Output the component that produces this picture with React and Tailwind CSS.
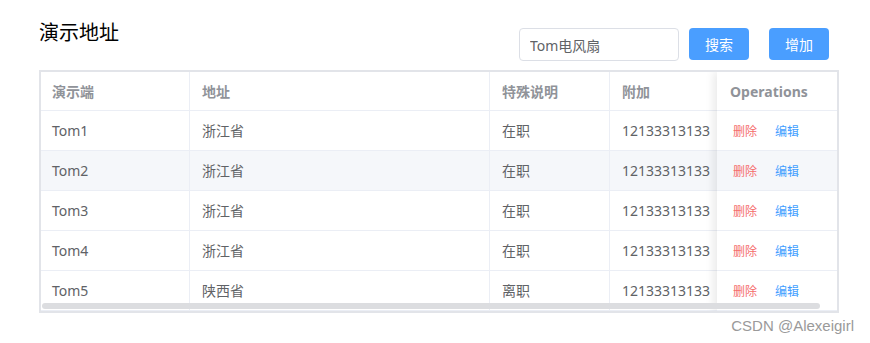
const rows = [
  { name: "Tom1", addr: "浙江省", note: "在职", extra: "12133313133" },
  { name: "Tom2", addr: "浙江省", note: "在职", extra: "12133313133" },
  { name: "Tom3", addr: "浙江省", note: "在职", extra: "12133313133" },
  { name: "Tom4", addr: "浙江省", note: "在职", extra: "12133313133" },
  { name: "Tom5", addr: "陕西省", note: "离职", extra: "12133313133" },
];

const font = "font-['Noto_Sans','Noto_Sans_CJK_SC',sans-serif]";

export default function App() {
  return (
    <main className={`w-[870px] h-[343px] bg-white overflow-hidden ${font}`}>
      <div className="ml-[39px] w-[800px] pt-[20px]">
        <div className="flex justify-between items-start h-[50px]">
          <h1 className="text-[20px] leading-[26px] text-black">演示地址</h1>

          <div className="flex items-start mt-[8px] mr-[10px]">
            <input
              type="text"
              defaultValue="Tom电风扇"
              className="w-[160px] h-[33px] px-[10px] text-[14px] text-[#606266] border border-[#dcdfe6] rounded-[4px] outline-none"
            />
            <button className="ml-[10px] w-[60px] h-[32px] rounded-[4px] bg-[#4a9eff] text-white text-[14px]">
              搜索
            </button>
            <button className="ml-[20px] w-[60px] h-[32px] rounded-[4px] bg-[#4a9eff] text-white text-[14px]">
              增加
            </button>
          </div>
        </div>

        <div className="relative flex border-2 border-[#e2e4e9] h-[243px] overflow-hidden text-[14px]">
          {/* scrolling part */}
          <div className="flex-1 overflow-hidden">
            <div className="flex h-[39px] border-b border-[#ebeef5] text-[#909399] font-bold">
              <div className="w-[149px] shrink-0 pl-[11px] border-r border-[#ebeef5] flex items-center">演示端</div>
              <div className="w-[300px] shrink-0 pl-[12px] border-r border-[#ebeef5] flex items-center">地址</div>
              <div className="w-[120px] shrink-0 pl-[12px] border-r border-[#ebeef5] flex items-center">特殊说明</div>
              <div className="w-[120px] shrink-0 pl-[12px] flex items-center">附加</div>
            </div>
            {rows.map((r, i) => (
              <div
                key={r.name}
                className={`flex h-[40px] border-b border-[#ebeef5] text-[#606266] ${i === 1 ? "bg-[#f5f7fa]" : ""}`}
              >
                <div className="w-[149px] shrink-0 pl-[11px] border-r border-[#ebeef5] flex items-center">{r.name}</div>
                <div className="w-[300px] shrink-0 pl-[12px] border-r border-[#ebeef5] flex items-center">{r.addr}</div>
                <div className="w-[120px] shrink-0 pl-[12px] border-r border-[#ebeef5] flex items-center">{r.note}</div>
                <div className="w-[120px] shrink-0 pl-[12px] flex items-center whitespace-nowrap">{r.extra}</div>
              </div>
            ))}
          </div>

          {/* fixed right column */}
          <div className="w-[120px] shrink-0 bg-white z-10 shadow-[-4px_0_8px_rgba(0,0,0,0.08)]">
            <div className="h-[39px] border-b border-[#ebeef5] pl-[13px] flex items-center text-[#909399] font-bold">
              Operations
            </div>
            {rows.map((r, i) => (
              <div
                key={r.name}
                className={`h-[40px] border-b border-[#ebeef5] pl-[16px] pt-[2px] flex items-center gap-[18px] text-[12px] ${i === 1 ? "bg-[#f5f7fa]" : ""}`}
              >
                <span className="text-[#f56c6c]">删除</span>
                <span className="text-[#409eff]">编辑</span>
              </div>
            ))}
          </div>

          {/* horizontal scrollbar thumb */}
          <div className="absolute left-[1px] bottom-[2px] w-[778px] h-[6px] rounded-full bg-[#dcdde0] z-20" />
        </div>
      </div>

      <div className="flex justify-end pr-[16px] mt-[3px]">
        <span className="font-['Liberation_Sans',sans-serif] text-[15px] leading-[20px] text-[#9a9a9a]">
          CSDN @Alexeigirl
        </span>
      </div>
    </main>
  );
}
